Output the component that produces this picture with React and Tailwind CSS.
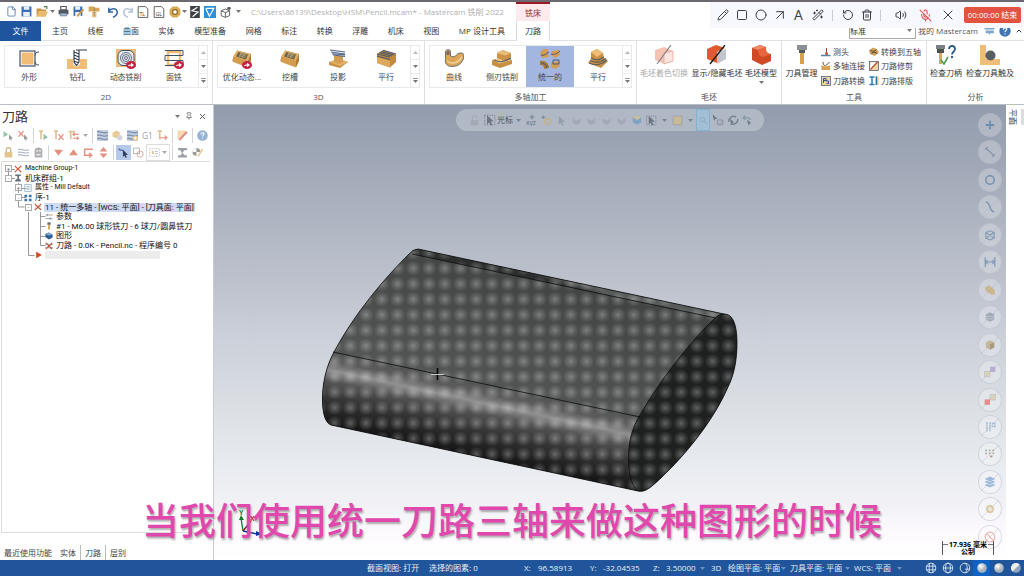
import {
  ArrowUpRight,
  ChevronUp,
  Circle,
  File,
  MicOff,
  Pencil,
  Pin,
  RotateCcw,
  Square,
  Trash2,
  Volume2,
  WandSparkles,
  X,
} from 'lucide-react';

const INK = '#44506a';

function Svg({ className = 'size-5', box = 20, children }) {
  return (
    <svg className={`shrink-0 ${className}`} viewBox={`0 0 ${box} ${box}`} fill="none" aria-hidden="true">
      {children}
    </svg>
  );
}

function Caret({ className = 'text-[#777]' }) {
  return (
    <svg className={`h-[3px] w-[5px] shrink-0 ${className}`} viewBox="0 0 5 3" aria-hidden="true">
      <path d="M0 0h5L2.5 3z" fill="currentColor" />
    </svg>
  );
}

/* ---------- ribbon icons ---------- */

const Badge = () => (
  <g>
    <ellipse cx="15" cy="16" rx="5" ry="4" fill="#c8203f" />
    <path d="M12 17.500c0-1.500 1-2 3-2v-1.700l3 2.200-3 2.200v-1.400c-1.300 0-2 0-3 .7z" fill="#fff" />
  </g>
);

const Block = ({ dark }) => (
  <g>
    <path d="M5 1.500 19 5l-3 12L0 12z" fill="#c98f42" />
    <path d="M5 1.500 19 5l-3 7L1 7.500z" fill="#e0b06a" />
    <path d="M1 7.500 16 12v6.500L1 13z" fill="#d39c50" />
    <path d="m16 12 3-7v7l-3 6.500z" fill="#b37a30" />
    <path d="M6.500 3 16 5.500l-2 5L4 7.500z" fill={dark ? '#6d6045' : '#8a6a3a'} />
    <path d="m8 4 6.500 1.700M7.500 5.300l6.500 1.700M7 6.700l6.500 1.700M9 3.800 7.500 8M12 4.600 10.500 9" stroke="#c5b48c" strokeWidth=".6" />
  </g>
);

const ICONS = {
  contour: (
    <>
      <rect x="1" y="2" width="15" height="15" stroke={INK} strokeWidth="1.200" fill="#fff" />
      <rect x="2.500" y="3.500" width="12" height="12" fill="#efbd77" />
      <path d="M20 3c-3 0-4 1.500-4 3.500M20 16c-3 0-4-1.500-4-3.500" stroke={INK} />
    </>
  ),
  drill: (
    <>
      <path d="M0 10h6v5l3.500 3 3.500-3v-5h7v10H0z" fill="#efbd77" />
      <path d="M9 1h11M7 3l5 2M7 6l5 2M7 9l5 2M7 12l5 2M7 1v12l2.500 3.500L12 13V1" stroke="#333c4b" strokeWidth="1.100" />
    </>
  ),
  dynamic: (
    <>
      <rect width="20" height="18" fill="#efbd77" />
      <rect x="2" y="1.500" width="16" height="15" rx="5" fill="#e7ebf0" stroke={INK} />
      <circle cx="10" cy="9" r="5.500" stroke={INK} strokeWidth=".8" />
      <circle cx="10" cy="9" r="3.500" stroke={INK} strokeWidth=".8" />
      <circle cx="10" cy="9" r="1.500" stroke={INK} strokeWidth=".8" />
      <Badge />
    </>
  ),
  face: (
    <>
      <rect x="4" y="3" width="12" height="13" stroke="#efbd77" strokeWidth="2.500" />
      <path d="M1 1.500h18v5H1v5h18v5H1" stroke={INK} />
      <Badge />
    </>
  ),
  opti: (
    <>
      <Block dark />
      <Badge />
    </>
  ),
  pocket: <Block dark />,
  project: (
    <>
      <path d="m1 13 10-3 9 3-8 6-11-3z" fill="#c98f42" />
      <path d="m1 13 10-3 9 3-8 4z" fill="#e3b168" />
      <path d="M6 7h9v6c-2 2-7 2-9 0z" fill="#d59d50" />
      <path d="m3 3 14 2M2 1l15 2M5 6l12 1.500M4 4.700 17 6" stroke="#4f6485" strokeWidth="1.100" />
    </>
  ),
  parallel3d: (
    <>
      <path d="m1 5 6-4 13 4v8l-6 5.500L1 14z" fill="#c38a3e" />
      <path d="m1 8 13 4v6.500L1 14z" fill="#dba85e" />
      <path d="m1 5 13 3M3 3.500 16 7M5 2.500 18 6M1 7l13 3.500M7 1.300 20 5" stroke="#4c5a6b" strokeWidth="1.100" />
    </>
  ),
  curve: (
    <>
      <path d="M1.500 2.500C2 0 6.500 0 6.500 2.500V7c3 1.500 5 .5 6-1 1-2 6-3 7.500-.5C20 13 15 17.500 8 17.500c-5 0-7.500-3-6.500-8z" fill="#dca65a" stroke="#5b6474" strokeWidth=".9" />
      <path d="M2.500 2.500c.5-1 3-1 3 0V6h-3z" fill="#7b6a50" />
      <path d="M3 12c5 4 11 2 15-4" stroke="#f4cf93" strokeWidth="1.500" />
    </>
  ),
  swarf: (
    <>
      <path d="M0 11 12 8l8 3v4l-12 4-8-3z" fill="#c98f42" />
      <path d="m0 11 12-3 8 3-12 3.500z" fill="#efc684" />
      <path d="m5 4 6-3 8 3v6l-6 2-8-3z" fill="#cc9345" />
      <path d="m5 4 6-3 8 3-6 2.500z" fill="#e9bd79" />
      <path d="M2 11c6 3 10 2 17-2" stroke="#58616e" strokeWidth="1.200" />
    </>
  ),
  unified: (
    <>
      <path d="M0 5 3 0h5v4l1 4-7 1z" fill="#d59d50" />
      <path d="m12 2 7-1 1 5-5 3-4-3z" fill="#d59d50" />
      <path d="M0 12c5-1 9 2 9 7l-5 1c0-3-1-4-4-4z" fill="#a77a3c" />
      <path d="m11 14 7-2 2 5-5 3-4-2z" fill="#d59d50" />
      <path d="M1 6c3 1 5-1 8-3M11 5c3 1 6 0 9-3M1 14c3 0 6 2 6 5M13 11h6v4h-6z" stroke="#4a5670" />
    </>
  ),
  parallel: (
    <>
      <path d="m3 3 6-3 6 4 1 5 4 3-7 7L0 14l3-4z" fill="#c98f42" />
      <path d="m3 3 6-3 6 4-6 4z" fill="#efbd77" />
      <path d="M3 9c5 3 9 2 13-1M2 11.500c6 3 11 2 16-2M1 14c6 3 12 2 18-3" stroke="#5a5d62" strokeWidth="1.100" />
    </>
  ),
  shade: (
    <>
      <path d="m1 5 9-3 9 4v10l-9 3-9-4z" fill="#f6c2b4" />
      <path d="m10 8 9-2v10l-9 3z" fill="#fbe6df" stroke="#efb0a0" />
      <path d="M17 0 3 19" stroke="#7b7d85" strokeWidth="1.100" />
    </>
  ),
  showStock: (
    <>
      <path d="m0 4 9-4 9 3-8 4v11L0 14z" fill="#e0592f" />
      <path d="m10 7 9-3v10l-9 5z" fill="#c2c5cb" />
      <path d="M18 0 3 19" stroke="#16181c" strokeWidth="1.300" />
    </>
  ),
  stock: (
    <>
      <path d="M1 3 9 0l6 2v3c0 3 2 4 5 4v7l-9 4-10-5z" fill="#cf4a24" />
      <path d="m1 3 8-3 6 2-8 3z" fill="#f08a66" />
      <path d="M7 5c1 5 1 6 5 7l8-3c-3-.2-5-2-5-5V2z" fill="#e5653c" />
    </>
  ),
  manager: (
    <>
      <path d="M5 0h10v5H5z" fill="#8b8f96" />
      <path d="M7 5h6v3H7z" fill="#55595f" />
      <path d="M8 8h4v11H8z" fill="#d4a24b" />
    </>
  ),
  holder: (
    <>
      <path d="M0 0h9v4H0z" fill="#7b7f86" />
      <path d="M1 4h7v4H1z" fill="#4c5057" />
      <path d="M3 8h3v11H3z" fill="#dca94f" />
      <path d="M13 4c0-4 6-4 6 0 0 2.500-3 3-3 5.500" stroke="#2b5f86" strokeWidth="1.800" />
      <circle cx="16" cy="12" r="1.200" fill="#2b5f86" />
      <path d="m5 15 3 4 4-7" stroke="#4f9a57" strokeWidth="1.600" />
    </>
  ),
  reach: (
    <>
      <path d="M0 0h6v14h14v6H0z" fill="#efbd77" />
      <circle cx="10.500" cy="10.500" r="5" fill="#595e66" />
    </>
  ),
  probe: (
    <>
      <path d="M0 17h19" stroke="#5a7fa6" strokeWidth="3" />
      <path d="M11 2v11" stroke="#8c4440" strokeWidth="2" />
      <circle cx="11" cy="13" r="3" fill="#d44532" />
    </>
  ),
  link: (
    <>
      <path d="m1 8 7 3 10-2v9H1z" fill="#d7a050" />
      <path d="M4 2c0 6 4 9 7 6l6-6" stroke="#5a4a3a" strokeWidth="2" />
    </>
  ),
  transform: (
    <>
      <rect x="1" y="1" width="18" height="18" fill="#f0d3a2" stroke="#4d5970" strokeWidth="1.500" />
      <path d="M5 14V5h5v5h5v5h-4M5 9h6" stroke="#2f5585" strokeWidth="2" />
    </>
  ),
  fiveAxis: (
    <>
      <path d="m0 7 8-6 7 3 5 6-8 8-10-4z" fill="#d3a257" />
      <path d="M2 6c5 4 9 3 13-1M5 13l5-3 7 3" stroke="#4e443a" strokeWidth="2" />
    </>
  ),
  trim: (
    <>
      <rect x="1" y="1" width="18" height="18" fill="#f0d3a2" stroke="#4d5970" strokeWidth="1.500" />
      <path d="M3 3h12L3 16z" fill="#fff" />
      <path d="M17 2 3 17" stroke="#b64b33" strokeWidth="2.500" />
    </>
  ),
  nest: (
    <>
      <path d="M1 2h10M6 2v14M1 17h10" stroke="#2e7bb1" strokeWidth="3" />
      <path d="M12 1h7v17h-7z" fill="#efbd77" />
      <path d="M15 1v17" stroke="#2e6fa1" strokeWidth="2" />
    </>
  ),
};

/* ---------- title bar ---------- */

function QuickAccess() {
  const btn = 'flex h-4 w-[15px] items-center justify-center';
  return (
    <div className="flex items-center pl-1">
      <button aria-label="新建" className={btn}><File className="size-[11px] text-[#5b86b5]" strokeWidth={2} /></button>
      <button aria-label="保存" className={btn}>
        <Svg className="size-[11px]"><path d="M1 1h18v18H1z" fill="#3b6fb0" /><path d="M5 1h10v6H5zM4 11h12v8H4z" fill="#eaf1f8" /></Svg>
      </button>
      <button aria-label="打开" className={btn}>
        <Svg className="size-3"><path d="M1 4h7l2 2h7v3H5L2 18H1z" fill="#c79546" /><path d="M5 9h15l-4 9H1z" fill="#e8bb6c" /><path d="M13 1h5v4" stroke="#508050" strokeWidth="2" /></Svg>
      </button>
      <span className="flex w-[7px] justify-center"><Caret /></span>
      <button aria-label="打印" className={btn}>
        <Svg className="size-[11px]"><path d="M5 1h10v6H5z" fill="#fff" stroke="#555" strokeWidth="2" /><path d="M1 7h18v8H1z" fill="#545a63" /><path d="M4 13h12v5H4z" fill="#9cc0de" stroke="#555" /></Svg>
      </button>
      <button aria-label="另存为" className={btn}>
        <Svg className="size-[11px]"><path d="M1 1h16v17H1z" fill="#3b6fb0" /><path d="M4 1h9v6H4zM4 11h10v7H4z" fill="#eaf1f8" /><path d="m19 6-9 10-2 3" stroke="#d69638" strokeWidth="3" /></Svg>
      </button>
      <button aria-label="打包" className={btn}>
        <Svg className="size-3"><path d="M1 1h8l2 2h8v6H1z" fill="#d9a654" /><path d="M7 9h7v10H7z" fill="#e6bd7b" /><path d="M10.500 2v15" stroke="#80725c" strokeWidth="2" strokeDasharray="2 2" /></Svg>
      </button>
      <span className="w-1" />
      <button aria-label="撤销" className={btn}>
        <Svg className="size-3"><path d="M3 3v7h7M3 9c4-6 14-6 14 2 0 4-3 6-7 8" stroke="#2f64a8" strokeWidth="2.500" /></Svg>
      </button>
      <button aria-label="重做" className={btn}>
        <Svg className="size-3"><path d="M17 3v7h-7M17 9C13 3 3 3 3 11c0 4 3 6 7 8" stroke="#b4c3d8" strokeWidth="2.500" /></Svg>
      </button>
      {['TL', 'GL'].map((t) => (
        <button key={t} className="flex h-4 w-4 items-center justify-center">
          <Svg className="size-3"><path d="M2 1h12l4 4v14H2z" stroke="#555" strokeWidth="1.500" /><text x="4" y="16" fontSize="9" fill="#444">{t}</text></Svg>
        </button>
      ))}
      <button aria-label="选项" className={btn}>
        <Svg className="size-3"><path d="M6 1h8l5 5v8l-5 5H6l-5-5V6z" fill="#d9a94f" /><circle cx="10" cy="10" r="4" fill="#fff" stroke="#8b6b33" strokeWidth="2" /></Svg>
      </button>
      <span className="flex w-[5px] justify-center"><Caret /></span>
      <button aria-label="刀具" className={btn}>
        <Svg className="size-3"><path d="M2 0h16v20H2z" fill="#3d4044" /><path d="M14 2 5 8l10 2-9 8" stroke="#fff" strokeWidth="2" /></Svg>
      </button>
      <button aria-label="检验" className={btn}>
        <Svg className="size-3"><path d="M0 0h20v20H0z" fill="#2f8fd6" /><path d="m3 4 6 13 8-14M4 4h13" stroke="#fff" strokeWidth="2" /></Svg>
      </button>
      <button aria-label="模型" className="flex h-4 w-[17px] items-center justify-center">
        <Svg className="size-3"><path d="m2 8 7-3 7 3v8l-7 3-7-3zM2 8l7 3 7-3M9 11v8" stroke="#555" strokeWidth="1.500" /><path d="M12 4c0-3 6-3 6 0s-6 3-6 0z" fill="#555" /></Svg>
      </button>
      <span className="flex w-[9px] justify-center"><Caret /></span>
    </div>
  );
}

function TitleBar() {
  return (
    <header className="flex h-[21px] border-t-2 border-[#6c6870]">
      <div className="flex w-[516px] items-center gap-2">
        <QuickAccess />
        <h1 className="flex-1 text-[8px] leading-3 whitespace-nowrap text-[#b0b0b0]">
          C:\Users\86139\Desktop\HSM\Pencil.mcam* - Mastercam 铣削 2022
        </h1>
      </div>
      <div className="flex w-[34px] items-center justify-center border-t-2 border-[#9c1822] bg-[#fdeaed] text-[8px] leading-none text-[#8c2b33]">
        铣床
      </div>
    </header>
  );
}

/** Floating screen-recorder controls laid over the window. */
function RecorderBar() {
  const btn = 'flex h-5 w-[19px] items-center justify-center';
  const icon = 'size-3';
  return (
    <div className="absolute top-0.5 right-0 flex h-[26px] w-[314px] items-center bg-[#f7f8fe] pr-[3px] pl-[3px] text-[#3c3f4a]">
      <button aria-label="画笔" className={btn}><Pencil className={icon} /></button>
      <button aria-label="矩形" className={btn}><Square className={icon} /></button>
      <button aria-label="圆形" className={btn}><Circle className={icon} /></button>
      <button aria-label="箭头" className={btn}><ArrowUpRight className="size-4" strokeWidth={1.5} /></button>
      <button className={`${btn} font-[Lato,sans-serif] text-[13px] leading-none`}>A</button>
      <button aria-label="魔棒" className={btn}><WandSparkles className={icon} /></button>
      <span className="mx-[5px] h-[11px] w-px bg-[#c9cad3]" />
      <button aria-label="还原" className={btn}><RotateCcw className={icon} /></button>
      <button aria-label="清空" className={btn}><Trash2 className={icon} /></button>
      <span className="mx-1 h-[11px] w-px bg-[#c9cad3]" />
      <button aria-label="声音" className="flex h-5 w-[31px] items-center justify-center"><Volume2 className={icon} /></button>
      <button aria-label="静音" className={`${btn} text-[#e05252]`}><MicOff className="size-[13px]" /></button>
      <button aria-label="关闭" className="flex h-5 w-[25px] items-center justify-center"><X className="size-4" strokeWidth={1.5} /></button>
      <button className="ml-auto h-4 w-[57px] rounded-xs bg-[#e2533f] text-[8px] leading-none whitespace-nowrap text-white">00:00:00 结束</button>
    </div>
  );
}

/* ---------- ribbon ---------- */

const TABS = ['主页', '线框', '曲面', '实体', '模型准备', '网格', '标注', '转换', '浮雕', '机床', '视图', 'MP 设计工具'];

function TabRow() {
  return (
    <nav className="flex h-5 text-[8px] leading-none text-[#333]">
      <button className="w-[41px] bg-[#1f559e] text-white">文件</button>
      <div className="flex w-[475px] justify-between border-b border-[#dfe1e4] pr-[11px] pl-[11px]">
        {TABS.map((t) => (
          <button key={t}>{t}</button>
        ))}
      </div>
      <button className="w-[34px] border-x border-[#d8dadd] bg-white">刀路</button>
      <div className="flex flex-1 items-center justify-end border-b border-[#dfe1e4] pr-px">
        <div className="flex h-4 w-[67px] items-center border border-[#aaa] pr-[3px]">
          <select aria-label="配置" defaultValue="标准" className="h-3 flex-1 appearance-none bg-white text-[8px] leading-3">
            <option>标准</option>
          </select>
          <Caret />
        </div>
        <a href="#mastercam" className="w-[68px] pl-0.5 whitespace-nowrap text-[#555]">我的 Mastercam</a>
        <Svg className="size-[11px]"><path d="M1 3h18v5H1zM3 10h15v5h-6l-3 3v-3H3z" fill="#7fa6cf" /></Svg>
        <Svg className="mx-1 size-3"><circle cx="10" cy="10" r="9.500" fill="#3f74b3" /><path d="M7 8c0-4 6-4 6-1 0 2-3 2-3 5M10 14v2" stroke="#fff" strokeWidth="2" /></Svg>
        <ChevronUp className="size-2" strokeWidth={3} />
      </div>
    </nav>
  );
}

function Group({ label, className, children }) {
  return (
    <section className={`flex flex-col border-r border-[#dedfe2] pt-1 ${className}`}>
      <div className="flex h-[43px]">{children}</div>
      <h2 className="pt-1 text-center text-[8px] leading-[10px] text-[#555]">{label}</h2>
    </section>
  );
}

function Gallery({ items, active }) {
  return (
    <div className="mx-1 flex flex-1 border border-[#e9eaec]">
      {items.map(([icon, label]) => (
        <button
          key={label}
          className={`flex flex-1 flex-col items-center gap-[3px] pt-[3px] text-[8px] leading-[10px] whitespace-nowrap text-[#444] ${
            label === active ? 'bg-[#a2b6e0]' : ''
          }`}
        >
          <Svg>{ICONS[icon]}</Svg>
          {label}
        </button>
      ))}
      <div className="flex w-[9px] flex-col divide-y divide-[#e9eaec] border-l border-[#e9eaec]">
        <button aria-label="上移" className="flex flex-1 items-center justify-center"><Caret className="rotate-180 text-[#b9b9b9]" /></button>
        <button aria-label="下移" className="flex flex-1 items-center justify-center"><Caret /></button>
        <button aria-label="展开" className="flex flex-1 flex-col items-center justify-center gap-px"><span className="h-px w-[5px] bg-[#999]" /><Caret /></button>
      </div>
    </div>
  );
}

function BigButton({ icon, label, width, dim, menu }) {
  return (
    <button className={`flex flex-col items-center gap-1 text-[8px] leading-[8px] whitespace-nowrap ${width} ${dim ? 'text-[#aaa]' : 'text-[#333]'}`}>
      <Svg>{ICONS[icon]}</Svg>
      {label}
      {menu && <Caret />}
    </button>
  );
}

const TOOL_ROWS = [
  ['probe', '测头'],
  ['fiveAxis', '转换到五轴'],
  ['link', '多轴连接'],
  ['trim', '刀路修剪'],
  ['transform', '刀路转换'],
  ['nest', '刀路排版'],
];

function Ribbon() {
  return (
    <div className="flex h-16 border-b border-[#b9bec6] bg-white">
      <Group label="2D" className="w-[213px]">
        <Gallery items={[['contour', '外形'], ['drill', '钻孔'], ['dynamic', '动态铣削'], ['face', '面铣']]} />
      </Group>
      <Group label="3D" className="w-[212px]">
        <Gallery items={[['opti', '优化动态...'], ['pocket', '挖槽'], ['project', '投影'], ['parallel3d', '平行']]} />
      </Group>
      <Group label="多轴加工" className="w-[212px]">
        <Gallery active="统一的" items={[['curve', '曲线'], ['swarf', '侧刃铣削'], ['unified', '统一的'], ['parallel', '平行']]} />
      </Group>
      <Group label="毛坯" className="w-[145px]">
        <BigButton icon="shade" label="毛坯着色切换" width="w-[54px]" dim />
        <BigButton icon="showStock" label="显示/隐藏毛坯" width="w-[52px]" />
        <BigButton icon="stock" label="毛坯模型" width="w-[36px]" menu />
      </Group>
      <Group label="工具" className="w-[145px]">
        <BigButton icon="manager" label="刀具管理" width="w-[39px]" />
        <div className="grid flex-1 grid-cols-[48px_1fr] text-[8px] leading-none whitespace-nowrap text-[#444]">
          {TOOL_ROWS.map(([icon, label]) => (
            <button key={label} className="flex items-center gap-0.5">
              <Svg className="size-[10px]">{ICONS[icon]}</Svg>
              {label}
            </button>
          ))}
        </div>
      </Group>
      <Group label="分析" className="flex-1 border-r-0">
        <BigButton icon="holder" label="检查刀柄" width="w-[38px]" />
        <BigButton icon="reach" label="检查刀具触及" width="w-[50px]" />
      </Group>
    </div>
  );
}

/* ---------- toolpath manager ---------- */

const MINI = {
  selectAll: <><path d="M1 2v11l8-5z" fill="#4a9a6a" /><path d="m11 8 7 7-3 .5 1 3-2 .5-1-3-2 2z" fill="#555" /></>,
  selectBad: <><path d="m1 2 9 10M10 2 1 12" stroke="#d4452f" strokeWidth="2.500" /><path d="m11 8 7 7-3 .5 1 3-2 .5-1-3-2 2z" fill="#555" /></>,
  regen: <><path d="M2 2h7M5.500 2v15" stroke="#c89a4c" strokeWidth="3" /><path d="M10 7v11l8-5z" fill="#4a9a6a" /></>,
  regenBad: <><path d="M2 2h7M5.500 2v15" stroke="#c89a4c" strokeWidth="3" /><path d="m10 8 9 10M19 8l-9 10" stroke="#d4452f" strokeWidth="2.500" /></>,
  swap: <><path d="M1 3h12M5 3v14" stroke="#c89a4c" strokeWidth="3" /><path d="M19 8H9m3-3L9 8l3 3M9 15h10m-3-3 3 3-3 3" stroke="#d4452f" strokeWidth="2" /></>,
  waves: <><path d="M0 0h20v20H0z" fill="#9fb1d0" /><path d="M0 4c5-4 8 4 20 0M0 10c5-4 8 4 20 0M0 16c5-4 8 4 20 0" stroke="#2e4a7c" strokeWidth="2.500" /></>,
  wavesGear: <><path d="M0 0h20v20H0z" fill="#9fb1d0" /><path d="M0 4c5-4 8 4 20 0M0 10c5-4 8 4 20 0M0 16c5-4 8 4 12 0" stroke="#2e4a7c" strokeWidth="2.500" /><circle cx="15" cy="15" r="3.500" fill="#fff" stroke="#d9a23f" strokeWidth="2.500" /></>,
  verify: <><path d="m1 5 7-4 6 3v8l-6 3-7-3z" fill="#d9a654" /><circle cx="14" cy="14" r="5" fill="#b7bdc6" /></>,
  g1: <text x="0" y="16" fontSize="15" fill="#555f78">G1</text>,
  feed: <><path d="M1 2h8M5 2v15" stroke="#c89a4c" strokeWidth="3" /><path d="M5 14h13m-4-4 4 4-4 4" stroke="#d4452f" strokeWidth="2" /></>,
  edit: <><path d="M1 1h16L1 18z" fill="#f0c27c" /><path d="M18 3 4 18" stroke="#d0442f" strokeWidth="4" /></>,
  help: <><circle cx="10" cy="10" r="9.500" fill="#4f7fb8" /><path d="M7 8c0-4 6-4 6-1 0 2-3 2-3 5M10 14v2" stroke="#fff" strokeWidth="2" /></>,
  lock: <><path d="M3 9h14v10H3z" fill="#d3a045" /><path d="M6 9V5c0-5 8-5 8 0v4" stroke="#b08a48" strokeWidth="2.500" /></>,
  path: <path d="M0 5c5-4 8 4 20 0M0 10c5-4 8 4 20 0M0 15c5-4 8 4 20 0" stroke="#687894" strokeWidth="2" />,
  ghost: <><path d="M3 19V6c0-7 14-7 14 0v13z" fill="#777b82" /><path d="M6 7h3M11 7h3M6 14h8" stroke="#fff" strokeWidth="2" /></>,
  down: <path d="M2 5h16l-8 11z" fill="#d4452f" />,
  up: <path d="M2 15h16L10 4z" fill="#d4452f" />,
  insert: <path d="M18 4H3v11h12m-4-4 5 4-5 4" stroke="#d4452f" strokeWidth="2.500" />,
  scroll: <><path d="M3 8h14L10 0zM3 12h14l-7 8z" fill="#d4452f" /></>,
  pick: <><path d="M1 3c4 6 5 0 8 4" stroke="#3c5c94" strokeWidth="2" /><path d="m9 5 9 9-4 .5 2 4-2.500 1-2-4L9 18z" fill="#2c3f63" /></>,
  boxes: <><rect x="1" y="2" width="11" height="10" stroke="#777" strokeWidth="1.500" /><circle cx="13" cy="13" r="5.500" stroke="#c55" strokeWidth="1.500" /></>,
  list: <><rect x="1" y="3" width="18" height="14" stroke="#888" strokeDasharray="2 2" strokeWidth="1.500" /><path d="M5 7h4v6H5z" fill="#d9a654" /><path d="M11 8h5M11 12h5" stroke="#5b7cae" strokeWidth="1.500" /></>,
  machine: <><path d="M2 2h16v4h-5l-3 5 4 4h4v4H2v-4h5l2-4-3-5H2z" fill="#596170" /></>,
  probe: <><circle cx="8" cy="9" r="7" fill="#555" /><path d="M8 2v7H1a7 7 0 0 1 7-7zM8 9h7a7 7 0 0 1-7 7z" fill="#fff" /><path d="m19 4-8 13" stroke="#d9a94f" strokeWidth="3" /></>,
};

function Mini({ name, on }) {
  return (
    <button aria-label={name} className={`flex h-[15px] w-[15px] shrink-0 items-center justify-center ${on ? 'bg-[#b7c9ea]' : 'opacity-60'}`}>
      <Svg className="size-[11px]">{MINI[name]}</Svg>
    </button>
  );
}

const Bar = ({ className = 'mx-0.5' }) => <span className={`h-[15px] w-px shrink-0 bg-[#d3d5d9] ${className}`} />;

const minis = (names) => names.map((n) => <Mini key={n} name={n} />);

const TREE = [
  { pad: 'pl-[3px]', box: '+', icon: <path d="m2 2 16 16M18 2 2 18" stroke="#d8552f" strokeWidth="3" />, text: 'Machine Group-1', size: 'text-[7px]' },
  { pad: 'pl-[3px]', box: '-', icon: <path d="M3 1h14v4h-4l-1 6 5 4v4H3v-4l6-4-1-6H3z" fill="#66707c" />, text: '机床群组-1' },
  { pad: 'pl-[13px]', box: '+', icon: <path d="M2 1h16v18H2zM6 6h8M6 10h8M6 14h8" stroke="#8eacc0" strokeWidth="2" />, text: '属性 - Mill Default', size: 'text-[7px]' },
  { pad: 'pl-[13px]', box: '-', icon: <path d="M1 2h7v6H1zM12 2h7v6h-7zM1 12h7v6H1zM12 12h7v6h-7z" fill="#3d78a8" />, text: '序-1' },
  { pad: 'pl-[23px]', box: '-', icon: <><path d="m2 2 16 16M18 2 2 18" stroke="#d8552f" strokeWidth="3" /><path d="M2 8h16M2 13h16" stroke="#777" /></>, text: '11 - 统一多轴 - [WCS: 平面] - [刀具面: 平面]', on: true },
  { pad: 'pl-[43px]', icon: <path d="M1 5h18M1 14h18M6 2v6M13 11v6" stroke="#8290a5" strokeWidth="2" />, text: '参数' },
  { pad: 'pl-[43px]', icon: <><path d="M6 1h8v6H6z" fill="#666" /><path d="M8 7h4v12H8z" fill="#c99b3f" /></>, text: '#1 - M6.00 球形铣刀 - 6 球刀/圆鼻铣刀' },
  { pad: 'pl-[43px]', icon: <><path d="M1 5 9 1l10 5v8l-9 5-9-6z" fill="#2e5e96" /><path d="m1 5 8-4 10 5-9 3z" fill="#7fa6cf" /></>, text: '图形' },
  { pad: 'pl-[43px]', icon: <><path d="m2 2 16 16M18 2 2 18" stroke="#d8452f" strokeWidth="3" /><path d="M1 6c5-4 8 4 18 0M1 14c5-4 8 4 18 0" stroke="#777" strokeWidth="2" /></>, text: '刀路 - 0.0K - Pencil.nc - 程序编号 0' },
];

function ToolpathPanel() {
  return (
    <aside className="flex w-[214px] flex-col border-r border-[#c9ccd1] bg-white">
      <div className="flex h-[22px] items-center gap-[5px] pr-[6px] pl-0.5 text-[#555]">
        <h2 className="flex-1 text-[13px] leading-none text-[#333]">刀路</h2>
        <Caret />
        <Pin className="size-2" />
        <button aria-label="关闭面板"><X className="size-[9px]" strokeWidth={2.5} /></button>
      </div>
      <div className="flex h-[17px] items-center pl-px">
        {minis(['selectAll', 'selectBad'])}
        <Bar />
        {minis(['regen', 'regenBad', 'swap'])}
        <span className="flex w-[9px] justify-center"><Caret className="text-[#aaa]" /></span>
        <Bar />
        {minis(['waves', 'verify', 'wavesGear', 'g1', 'feed'])}
        <Bar />
        {minis(['edit'])}
        <Bar />
        {minis(['help'])}
      </div>
      <div className="flex h-[17px] items-center pl-px">
        {minis(['lock', 'path', 'ghost'])}
        <Bar />
        {minis(['down', 'up', 'insert', 'scroll'])}
        <Bar />
        <Mini name="pick" on />
        {minis(['boxes'])}
        <div className="flex items-center border border-[#ddd]">
          {minis(['list'])}
          <Caret className="mr-0.5 text-[#aaa]" />
        </div>
        <Bar />
        {minis(['machine', 'probe'])}
      </div>
      <div className="mr-[3px] ml-px flex-1 border-y border-l border-[#dcdcdc] pt-0.5">
        <ul className="relative grid h-24 auto-rows-fr font-[Roboto,'Noto_Sans_CJK_SC',sans-serif] text-[8px] leading-[9px] whitespace-nowrap text-[#111]">
          <svg className="absolute top-0 left-0 h-24 w-16" viewBox="0 0 64 96" fill="none" stroke="#999" aria-hidden="true">
            <path d="M6.500 5v10M9 5.500h4M9 14.500h4M16.500 19v10M20 24.500h4M20 33.500h4M16.500 34v9h6M26.500 48v43.500h6M38.500 48v33.500M38.500 52.500h5M38.500 62.500h5M38.500 72.500h5M38.500 81.500h5" />
          </svg>
          {TREE.map((row) => (
            <li key={row.text} className={`relative flex items-center ${row.pad} ${row.size ?? ''}`}>
              {row.box && (
                <button aria-label="展开" className="mr-0.5 flex size-[7px] items-center justify-center border border-[#aaa] bg-white text-[6px] leading-none text-[#666]">
                  {row.box}
                </button>
              )}
              <Svg className="size-2">{row.icon}</Svg>
              <span className={row.on ? 'ml-0.5 bg-[#cfdaf3] px-px' : 'ml-[3px]'}>{row.text}</span>
            </li>
          ))}
          <li className="relative flex items-center pl-[33px]">
            <Svg className="size-2"><path d="M3 2v16l14-8z" fill="#cf4a24" /></Svg>
            <span className="ml-0.5 h-2 w-[115px] bg-[#ececec]" />
          </li>
        </ul>
      </div>
      <div className="flex h-[27px] items-end text-[8px] leading-[15px] text-[#444]">
        <button className="px-1">最近使用功能</button>
        <button className="px-1">实体</button>
        <button className="border-x border-[#bbb] px-1">刀路</button>
        <button className="px-1">层别</button>
      </div>
    </aside>
  );
}

/* ---------- graphics window ---------- */

function Model() {
  const body =
    'M418 249 724 314C733 314 737 325 737 343C737 360 734 375 728 387C716 415 693 446 669 470C660 479 652 487 646 490Q643 492 638 491L331 425C325 423 322 412 322.500 396C323 380 327 365 334 352C350 322 375 288 408 255Q413 249 418 249Z';
  return (
    <svg className="absolute inset-0 size-full" viewBox="214 105 792 455" aria-hidden="true">
      <defs>
        <pattern id="dots" x="405.400" y="260.500" width="15.750" height="15.500" patternUnits="userSpaceOnUse">
          <rect width="15.750" height="15.500" fill="url(#dot)" />
        </pattern>
        <radialGradient id="dot">
          <stop offset="0" stopColor="#fff" stopOpacity=".3" />
          <stop offset=".45" stopColor="#fff" stopOpacity=".15" />
          <stop offset="1" stopColor="#fff" stopOpacity="0" />
        </radialGradient>
        <linearGradient id="top" gradientUnits="userSpaceOnUse" x1="530" y1="278" x2="500" y2="390">
          <stop offset="0" stopColor="#424543" />
          <stop offset="1" stopColor="#535554" />
        </linearGradient>
        <linearGradient id="front" gradientUnits="userSpaceOnUse" x1="487" y1="384" x2="472" y2="454">
          <stop offset="0" stopColor="#515352" />
          <stop offset=".14" stopColor="#5c5c5c" />
          <stop offset=".27" stopColor="#8f8f8f" />
          <stop offset=".42" stopColor="#535353" />
          <stop offset=".65" stopColor="#353535" />
          <stop offset="1" stopColor="#161616" />
        </linearGradient>
        <linearGradient id="rim" gradientUnits="userSpaceOnUse" x1="570" y1="281" x2="568" y2="287">
          <stop offset="0" stopColor="#565b5a" />
          <stop offset="1" stopColor="#2c2e2d" />
        </linearGradient>
        <clipPath id="bodyClip"><path d={body} /></clipPath>
      </defs>
      <g clipPath="url(#bodyClip)">
        <path d="M310 240h440v260H310z" fill="url(#top)" />
        <path d="M412 240 740 308v15L412 254z" fill="url(#rim)" />
        <path d="m310 347 330 70v90H310z" fill="url(#front)" />
      </g>
      <path
        d="M724 314C733 314 737 325 737 343C737 360 734 375 728 387C716 415 693 446 669 470C660 479 652 487 646 490Q643 492 638 491C630 484 628 470 628.500 455C629 440 632 428 640 415C660 380 690 342 715 318Q719 314 724 314Z"
        fill="#1e1f1f"
      />
      <path d={body} fill="url(#dots)" />
      <g stroke="#0c0c0c" strokeWidth=".8" fill="none">
        <path d={body} />
        <path d="m412 254 304 64M333 352l307 65M724 314Q719 314 715 318C690 342 660 380 640 415C632 428 629 440 628.500 455C628 470 630 484 638 491" />
      </g>
      <path d="M437.500 368v12" stroke="#000" strokeWidth="1.500" />
      <path d="M431 374.500h13" stroke="#ccc" />
      <g strokeWidth="1.300" fontSize="7" fontWeight="bold">
        <path d="m243 531-2-13" stroke="#0c7a2c" />
        <path d="m239 520 2-5 3 5z" fill="#0c7a2c" />
        <text x="239" y="515" fill="#0c7a2c">Y</text>
        <path d="m243 531 8-10" stroke="#7a1616" />
        <text x="250" y="521" fill="#c22">X</text>
        <path d="m243 531 14 3" stroke="#1130a0" />
        <path d="m256 531 6 3-6 2z" fill="#1130a0" />
      </g>
    </svg>
  );
}

const cube = (a, b) => <><path d="m3 6 7-4 7 4v8l-7 4-7-4z" fill={a} /><path d="m3 6 7-4 7 4-7 4z" fill={b} /></>;
const arrow = <path d="m5 2 11 10-5 .5 3 5-2.500 1.500-3-5L5 17z" fill="#56606f" />;

function SelectionBar() {
  const cell = 'flex h-full w-[15px] shrink-0 items-center justify-center opacity-75';
  const faint = 'flex h-full w-[15px] shrink-0 items-center justify-center opacity-30';
  const size = 'size-[11px]';
  return (
    <div className="absolute top-1 left-[242px] flex h-[22px] w-[308px] items-center rounded-full bg-[#c3cad5]/60 pl-[11px] text-[8px] leading-none text-[#4a5361]">
      <span className={faint}><Svg className={size}><path d="M3 9h14v10H3z" fill="#888" /><path d="M6 9V5c0-5 8-5 8 0" stroke="#888" strokeWidth="2" /></Svg></span>
      <button className="flex items-center gap-px pl-0.5 whitespace-nowrap">
        <Svg className="size-3 opacity-75"><path d="M1 2h17v16H1z" stroke="#667" strokeDasharray="2 2" strokeWidth="1.500" />{arrow}</Svg>
        光标
      </button>
      <span className="mx-[3px]"><Caret className="text-[#7b8594]" /></span>
      <button aria-label="坐标" className={cell}><Svg className="size-3"><path d="M10 1v8M6 5h8" stroke="#567" strokeWidth="1.500" /><text x="0" y="18" fontSize="11" fill="#456">xyz</text></Svg></button>
      <button aria-label="设置" className={cell}><Svg className={size}><circle cx="12" cy="12" r="5" stroke="#c9b27c" strokeWidth="3" /><path d="M1 4h7M4 1v6" stroke="#567" strokeWidth="1.500" /></Svg></button>
      <button aria-label="选择" className={faint}><Svg className={size}>{arrow}</Svg></button>
      {[1, 2, 3, 4].map((n) => (
        <button key={n} aria-label={`实体${n}`} className={faint}><Svg className={size}>{cube('#7e8796', '#b9c0ca')}</Svg></button>
      ))}
      <button aria-label="着色" className={cell}><Svg className="size-3">{cube('#6f9cc4', '#d3c08f')}</Svg></button>
      <button aria-label="窗选" className={cell}><Svg className={size}><path d="M1 2h17v16H1z" stroke="#667" strokeDasharray="2 2" strokeWidth="1.500" />{arrow}</Svg></button>
      <span className="mx-[3px]"><Caret className="text-[#7b8594]" /></span>
      <button aria-label="区域" className={cell}><Svg className={size}><rect x="2" y="2" width="16" height="16" fill="#d0bb8b" stroke="#777" strokeDasharray="2 2" strokeWidth="1.500" /></Svg></button>
      <span className="mx-[3px]"><Caret className="text-[#7b8594]" /></span>
      <button aria-label="验证" className="flex h-[22px] w-[14px] shrink-0 items-center justify-center border border-[#82b2d4] bg-[#a3bfd6]"><Svg className={size}><circle cx="8" cy="8" r="4" stroke="#93adc4" strokeWidth="2" /><path d="m11 11 5 5" stroke="#93adc4" strokeWidth="2" /></Svg></button>
      <button aria-label="确认选择" className={cell}><Svg className="size-3"><path d="m1 1 8 7-4 .5-1.500 3z" fill="#56606f" /><path d="M9 10h9v8H9zM11 14l2 2 4-4" stroke="#778" strokeWidth="1.300" /></Svg></button>
      <button aria-label="反选" className={cell}><Svg className="size-3"><path d="M3 13a8 8 0 0 1 12-8M18 8a8 8 0 0 1-12 8" stroke="#667080" strokeWidth="2.500" /><path d="m5 8 7 6-3 .5-2 3z" fill="#56606f" /></Svg></button>
      <button aria-label="上次选择" className={cell}><Svg className={size}><path d="M2 5h8c4 0 5 2 5 4M6 1 2 5l4 4" stroke="#6b9090" strokeWidth="2" /><path d="m9 8 8 7-3 .5-2 3.500z" fill="#56606f" /></Svg></button>
    </div>
  );
}

const QUICK_MASKS = [
  ['点', <path d="M10 3v14M3 10h14" stroke="#4f7ba6" strokeWidth="3" />],
  ['线', <path d="m3 4 14 12M2 6l4-4M14 18l4-4" stroke="#667b94" strokeWidth="2" />],
  ['圆弧', <circle cx="10" cy="10" r="7" stroke="#5a7ba4" strokeWidth="2.500" />],
  ['曲线', <path d="M3 2c9 0 5 16 14 16" stroke="#5a7ba4" strokeWidth="2" />],
  ['线框', <path d="m3 6 7-3 7 3v9l-7 3-7-3zM3 15 17 6M3 6l14 9" stroke="#6d8bab" strokeWidth="2" />],
  ['标注', <path d="M2 2v16M18 2v16M2 10h16M6 7l-4 3 4 3M14 7l4 3-4 3" stroke="#6086ad" strokeWidth="2" />],
  ['曲面', <path d="m2 6 6-4 10 8v7l-5 1L2 11z" fill="#c9ab73" />],
  ['网格', <><path d="m3 6 7-4 7 4v8l-7 4-7-4z" fill="#8c98a6" /><path d="M3 9h14M3 13h14" stroke="#cdd3da" /></>],
  ['实体', <><path d="m3 6 7-4 7 4v8l-7 4-7-4z" fill="#bca67b" /><path d="m10 9 7-3v8l-7 4z" fill="#977f53" /></>],
  ['群组', <><path d="M10 1h9v9h-9z" fill="#a79ccb" /><path d="M1 9h9v9H1z" fill="#d8cda9" stroke="#aaa" /></>],
  ['结果', <><path d="M10 1h9v9h-9z" fill="#d8cda9" stroke="#aaa" /><path d="M1 9h9v9H1z" fill="#ea6a67" /></>],
  ['属性', <path d="M5 2v16M10 2v16M13 4h5v5h-5" stroke="#84a3c6" strokeWidth="2.500" strokeDasharray="3 1" />],
  ['颜色', <><path d="M2 4h16M2 9h16" stroke="#998" strokeWidth="3" strokeDasharray="3 3" /><path d="M10 14h4" stroke="#a66" strokeWidth="3" /></>],
  ['层别', <path d="m1 5 9-4 9 4-9 4zM1 10l9 4 9-4-4-2-5 2-5-2zM1 15l9 4 9-4-4-2-5 2-5-2z" fill="#7fa4ce" />],
  ['选项', <circle cx="10" cy="10" r="5" stroke="#cfbd8a" strokeWidth="4" />],
  ['清除', <><circle cx="10" cy="10" r="8" stroke="#e59a92" strokeWidth="2" /><path d="m4 4 12 12" stroke="#e59a92" strokeWidth="2" /></>],
];

function MaskColumn() {
  return (
    <div className="absolute top-2 right-1 flex h-[436px] flex-col justify-between">
      {QUICK_MASKS.map(([name, art]) => (
        <button key={name} aria-label={name} className="flex size-6 items-center justify-center rounded-full border border-[#a9b0bd]/40 bg-white/25 bg-[linear-gradient(135deg,transparent_49%,#a9b0bd66_49%,#a9b0bd66_52%,transparent_52%)]">
          <Svg className="size-3 opacity-70">{art}</Svg>
        </button>
      ))}
    </div>
  );
}

function Viewport() {
  return (
    <main className="relative flex-1 overflow-hidden bg-[linear-gradient(#929cac_0%,#a0a8b7_13%,#b0b7c3_27%,#bec3ce_40%,#ccd1da_52%,#dbdfe4_66%,#e9ecf1_80%,#f2f2f6_88%,#fdfafe_94%,#fff_100%)]">
      <Model />
      <SelectionBar />
      <MaskColumn />
      <div className="absolute right-3 bottom-[5px] flex w-[52px] flex-col border-x border-[#555] text-center text-[7px] leading-[7px] font-bold whitespace-nowrap text-black">
        <p className="flex items-center gap-px">
          <span className="h-px flex-1 bg-[#777]" />
          17.936 毫米
          <span className="h-px flex-1 bg-[#777]" />
        </p>
        <p>公制</p>
      </div>
    </main>
  );
}

/* ---------- status bar ---------- */

const SHADES = [
  <><circle cx="10" cy="10" r="8" /><path d="M2 7h16M2 13h16M7 2v16M13 2v16" /></>,
  <><circle cx="10" cy="10" r="8" /><ellipse cx="10" cy="10" rx="4" ry="8" /><path d="M2 10h16" /></>,
  <><circle cx="10" cy="10" r="8" /><path d="M10 2c5 4 5 12 0 16M10 12h8" /></>,
  <circle cx="10" cy="10" r="8" fill="url(#ball)" stroke="none" />,
  <circle cx="10" cy="10" r="8" fill="url(#ball)" stroke="none" />,
  <><circle cx="10" cy="10" r="8" fill="#8fa3bf" stroke="none" /><path d="M16 4A8 8 0 0 0 4 16z" fill="#eee" stroke="none" /></>,
];

function StatusBar() {
  return (
    <footer className="flex h-4 items-center justify-end bg-[#20559b] text-[8px] leading-none whitespace-nowrap text-[#e6edf6]">
      <span className="w-[62px]">截面视图: 打开</span>
      <span className="w-[95px]">选择的图素: 0</span>
      <span className="w-[14px]">X:</span>
      <span className="w-[52px]">96.58913</span>
      <span className="w-[13px]">Y:</span>
      <span className="w-[50px]">-32.04535</span>
      <span className="w-[13px]">Z:</span>
      <span className="w-[34px]">3.50000</span>
      <span className="flex w-[11px]"><Caret className="text-[#6c90c0]" /></span>
      <span className="w-[17px]">3D</span>
      <button className="flex w-[62px] items-center justify-between pr-1">绘图平面: 平面<Caret className="text-[#6c90c0]" /></button>
      <button className="flex w-[64px] items-center justify-between pr-1">刀具平面: 平面<Caret className="text-[#6c90c0]" /></button>
      <button className="flex w-[68px] items-center gap-1.5">WCS: 平面<Caret className="text-[#6c90c0]" /></button>
      <svg className="size-0" aria-hidden="true">
        <radialGradient id="ball" cx=".35" cy=".3">
          <stop offset="0" stopColor="#fff" />
          <stop offset="1" stopColor="#a9b2bd" />
        </radialGradient>
      </svg>
      {SHADES.map((art, i) => (
        <button key={i} aria-label={`显示模式 ${i + 1}`} className={`flex h-4 w-[17px] items-center justify-center ${i === 3 ? 'bg-[#0f63c4]' : ''}`}>
          <svg className="size-3" viewBox="0 0 20 20" fill="none" stroke="#dce6f3" strokeWidth="1.500" aria-hidden="true">{art}</svg>
        </button>
      ))}
    </footer>
  );
}

export default function App() {
  return (
    <div className="relative flex h-screen flex-col overflow-hidden bg-white font-['Open_Sans','Noto_Sans_CJK_SC',sans-serif]">
      <TitleBar />
      <TabRow />
      <RecorderBar />
      <Ribbon />
      <div className="flex min-h-0 flex-1">
        <ToolpathPanel />
        <Viewport />
        <div className="flex w-[18px] items-start justify-between bg-white pt-1 pl-0.5">
          <button className="text-[8px] leading-[11px] text-[#444] [text-orientation:sideways] [writing-mode:vertical-rl]">平面</button>
          <span className="h-4 w-[3px] bg-[#ddd]" />
        </div>
      </div>
      <StatusBar />
      <p className="pointer-events-none absolute inset-x-0 bottom-9 text-center text-[37px] leading-[38px] font-medium whitespace-nowrap text-[#e048ae] [text-shadow:1px_2px_2px_#77777799]">
        当我们使用统一刀路三轴来做这种图形的时候
      </p>
    </div>
  );
}
